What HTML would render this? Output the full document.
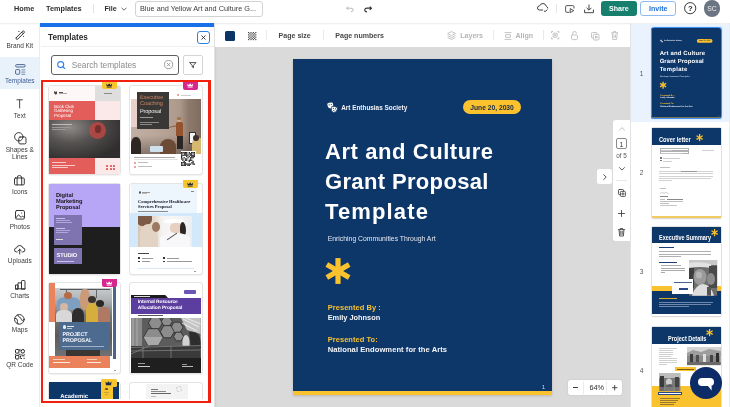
<!DOCTYPE html>
<html><head><meta charset="utf-8"><style>
html,body{margin:0;padding:0;}
body{width:730px;height:407px;overflow:hidden;position:relative;background:#fff;font-family:"Liberation Sans",sans-serif;}
.t{position:absolute;line-height:1;white-space:nowrap;}
.r{position:absolute;box-sizing:border-box;}
svg.r{overflow:visible;}
</style></head><body>
<div id="root" style="position:absolute;left:0;top:0;width:730px;height:407px;overflow:hidden;will-change:transform;"><div class="r" style="left:0.00px;top:22.50px;width:730.00px;height:2.50px;background:none;background:linear-gradient(180deg,#e9e9e9,#f4f4f4 45%,rgba(255,255,255,0));"></div><div class="t" style="left:14.00px;top:5.00px;font-size:7.3px;font-weight:700;color:#2e2e2e;letter-spacing:0px;">Home</div><div class="t" style="left:46.00px;top:5.00px;font-size:7.3px;font-weight:700;color:#2e2e2e;letter-spacing:0px;">Templates</div><div class="r" style="left:93.00px;top:3.70px;width:1.00px;height:9.00px;background:#e3e3e3;"></div><div class="t" style="left:104.50px;top:6.00px;font-size:7.1px;font-weight:700;color:#2e2e2e;letter-spacing:0px;">File</div><svg class="r" style="left:120.50px;top:6.50px;" width="6" height="4" viewBox="0 0 6 4"><path d="M0.6 0.8 L3 3.2 L5.4 0.8" fill="none" stroke="#555" stroke-width="0.9"/></svg><div class="r" style="left:135.00px;top:0.50px;width:128.00px;height:16.10px;background:#fff;border:1px solid #d2d2d2;border-radius:3px;"></div><div class="t" style="left:140.00px;top:5.00px;font-size:7.3px;font-weight:400;color:#3a3a3a;letter-spacing:0px;">Blue and Yellow Art and Culture G...</div><svg class="r" style="left:345.50px;top:5.50px;" width="8" height="6" viewBox="0 0 8 6"><path d="M2.2 0.6 L0.6 2.2 L2.2 3.8 M0.7 2.2 H5 Q7.3 2.2 7.3 4 Q7.3 5.6 5 5.6" fill="none" stroke="#b8b8b8" stroke-width="1"/></svg><svg class="r" style="left:363.50px;top:5.50px;" width="8" height="6.5" viewBox="0 0 8 6.5"><path d="M5.8 0.6 L7.4 2.2 L5.8 3.8 M7.3 2.2 H3 Q0.8 2.2 0.8 4 Q0.8 5.8 3 5.8" fill="none" stroke="#333" stroke-width="1.2"/></svg><svg class="r" style="left:537.00px;top:3.40px;" width="11.5" height="9.5" viewBox="0 0 11.5 9.5"><path d="M5.6 7 H2.5 Q0.5 7 0.5 5 Q0.5 3 2.5 2.9 Q3.5 0.5 6 0.5 Q8.5 0.5 9.2 3.1 Q10.7 3.6 10.7 5" fill="none" stroke="#3a3a3a" stroke-width="0.95" stroke-linecap="round"/><path d="M7.2 7.9 L8.1 8.7 L10.2 6.8" fill="none" stroke="#3a3a3a" stroke-width="0.95" stroke-linecap="round"/></svg><div class="r" style="left:556.00px;top:3.80px;width:1.00px;height:8.80px;background:#e6e6e6;"></div><svg class="r" style="left:565.00px;top:5.00px;" width="10" height="8" viewBox="0 0 10 8"><path d="M4.5 7.3 H1.8 Q0.6 7.3 0.6 6.1 V1.8 Q0.6 0.6 1.8 0.6 H7.8 Q9 0.6 9 1.8 V3.5" fill="none" stroke="#444" stroke-width="0.9"/><path d="M5.2 3.6 L8.8 5.6 L5.2 7.6 Z" fill="none" stroke="#444" stroke-width="0.9"/></svg><svg class="r" style="left:584.00px;top:3.80px;" width="10" height="9.3" viewBox="0 0 10 9.3"><path d="M5 0.5 V6 M2.6 3.8 L5 6.2 L7.4 3.8 M0.6 5.6 V8.7 H9.4 V5.6" fill="none" stroke="#444" stroke-width="1"/></svg><div class="r" style="left:601.00px;top:1.00px;width:35.60px;height:15.30px;background:#177f6e;border-radius:3px;"></div><div class="t" style="left:618.80px;transform:translateX(-50%);top:6.00px;font-size:7.1px;font-weight:700;color:#fff;letter-spacing:0px;">Share</div><div class="r" style="left:640.30px;top:0.60px;width:36.10px;height:15.70px;background:#fff;border:1px solid #8dbaf3;border-radius:3px;"></div><div class="t" style="left:658.30px;transform:translateX(-50%);top:6.00px;font-size:7.1px;font-weight:700;color:#1d6fd8;letter-spacing:0px;">Invite</div><svg class="r" style="left:684.00px;top:2.20px;" width="12.4" height="12.4" viewBox="0 0 12.4 12.4"><circle cx="6.2" cy="6.2" r="5.6" fill="none" stroke="#222" stroke-width="0.9"/><text x="6.2" y="8.7" font-size="7.6" font-weight="700" text-anchor="middle" fill="#222" font-family="Liberation Sans">?</text></svg><div class="r" style="left:703.60px;top:0.00px;width:16.60px;height:16.60px;background:#6b7482;border-radius:50%;"></div><div class="t" style="left:711.90px;transform:translateX(-50%);top:6.00px;font-size:6.8px;font-weight:400;color:#eef0f3;letter-spacing:0px;">SC</div><div class="r" style="left:39.30px;top:24.00px;width:0.80px;height:383.00px;background:#ececec;"></div><div class="r" style="left:0.00px;top:57.40px;width:39.30px;height:31.40px;background:#e9f1fb;"></div><div class="t" style="left:19.80px;transform:translateX(-50%);top:43.00px;font-size:6.5px;font-weight:400;color:#3a3a3a;letter-spacing:0px;">Brand Kit</div><div class="t" style="left:19.80px;transform:translateX(-50%);top:78.00px;font-size:6.5px;font-weight:400;color:#3d5e94;letter-spacing:0px;">Templates</div><div class="t" style="left:19.80px;transform:translateX(-50%);top:113.00px;font-size:6.5px;font-weight:400;color:#3a3a3a;letter-spacing:0px;">Text</div><div class="t" style="left:19.80px;transform:translateX(-50%);top:147.00px;font-size:6.5px;font-weight:400;color:#3a3a3a;letter-spacing:0px;">Shapes &amp;</div><div class="t" style="left:19.80px;transform:translateX(-50%);top:154.00px;font-size:6.5px;font-weight:400;color:#3a3a3a;letter-spacing:0px;">Lines</div><div class="t" style="left:19.80px;transform:translateX(-50%);top:189.00px;font-size:6.5px;font-weight:400;color:#3a3a3a;letter-spacing:0px;">Icons</div><div class="t" style="left:19.80px;transform:translateX(-50%);top:224.00px;font-size:6.5px;font-weight:400;color:#3a3a3a;letter-spacing:0px;">Photos</div><div class="t" style="left:19.80px;transform:translateX(-50%);top:258.00px;font-size:6.5px;font-weight:400;color:#3a3a3a;letter-spacing:0px;">Uploads</div><div class="t" style="left:19.80px;transform:translateX(-50%);top:293.00px;font-size:6.5px;font-weight:400;color:#3a3a3a;letter-spacing:0px;">Charts</div><div class="t" style="left:19.80px;transform:translateX(-50%);top:327.00px;font-size:6.5px;font-weight:400;color:#3a3a3a;letter-spacing:0px;">Maps</div><div class="t" style="left:19.80px;transform:translateX(-50%);top:362.00px;font-size:6.5px;font-weight:400;color:#3a3a3a;letter-spacing:0px;">QR Code</div><svg class="r" style="left:14.50px;top:29.50px;" width="11" height="10" viewBox="0 0 11 10"><path d="M1.3 7.6 L7.6 1.3 Q8.4 0.6 9.1 1.3 Q9.8 2.1 9.1 2.8 L2.8 9.1 Q2.1 9.8 1.3 9.1 Q0.6 8.4 1.3 7.6 Z M6.8 2.2 L8.2 3.6" fill="none" stroke="#2e2e2e" stroke-width="0.95" stroke-linecap="round" stroke-linejoin="round"/><circle cx="3.9" cy="1.4" r="0.55" fill="#2e2e2e"/><circle cx="8.5" cy="6.3" r="0.55" fill="#2e2e2e"/></svg><svg class="r" style="left:14.70px;top:64.00px;" width="10.8" height="10.8" viewBox="0 0 10.8 10.8"><rect x="0.6" y="0.6" width="9.6" height="2.4" rx="1.2" fill="none" stroke="#46618f" stroke-width="0.95" stroke-linejoin="round"/><rect x="0.6" y="5.6" width="4.1" height="4.6" rx="0.8" fill="none" stroke="#46618f" stroke-width="0.95" stroke-linejoin="round"/><path d="M6.4 5.9 H10.3 M6.4 8.1 H10.3 M6.4 10.3 H10.3" fill="none" stroke="#46618f" stroke-width="0.7"/></svg><svg class="r" style="left:16.30px;top:98.50px;" width="7.5" height="10" viewBox="0 0 7.5 10"><path d="M0.5 0.8 H6.8 M3.65 0.8 V9.3" fill="none" stroke="#333" stroke-width="0.9"/></svg><svg class="r" style="left:13.60px;top:132.30px;" width="12.6" height="12.4" viewBox="0 0 12.6 12.4"><circle cx="4.8" cy="4.8" r="4.2" fill="none" stroke="#2e2e2e" stroke-width="0.95" stroke-linecap="round" stroke-linejoin="round"/><rect x="4.8" y="5" width="7.2" height="6.9" rx="1.3" fill="none" stroke="#2e2e2e" stroke-width="0.95" stroke-linecap="round" stroke-linejoin="round"/></svg><svg class="r" style="left:14.30px;top:174.80px;" width="10.8" height="10.4" viewBox="0 0 10.8 10.4"><rect x="0.5" y="3" width="9.8" height="6.9" rx="1" fill="none" stroke="#2e2e2e" stroke-width="0.95" stroke-linecap="round" stroke-linejoin="round"/><path d="M3.1 9.9 V3 Q3.1 0.5 5.4 0.5 Q7.7 0.5 7.7 3 V9.9" fill="none" stroke="#2e2e2e" stroke-width="0.95" stroke-linecap="round" stroke-linejoin="round"/></svg><svg class="r" style="left:14.70px;top:210.40px;" width="10" height="9.6" viewBox="0 0 10 9.6"><rect x="0.5" y="0.5" width="9" height="8.6" rx="1.4" fill="none" stroke="#2e2e2e" stroke-width="0.95" stroke-linecap="round" stroke-linejoin="round"/><path d="M0.8 8 L3.4 4.8 L6.2 7.4 L7.6 6 L9.3 7.6" fill="none" stroke="#2e2e2e" stroke-width="0.95" stroke-linecap="round" stroke-linejoin="round"/><circle cx="6.6" cy="3" r="0.6" fill="#2e2e2e"/></svg><svg class="r" style="left:14.20px;top:245.40px;" width="11.5" height="9.5" viewBox="0 0 11.5 9.5"><path d="M3.2 7 H2.8 Q0.5 7 0.5 4.9 Q0.5 3 2.5 2.9 Q3.2 0.5 5.7 0.5 Q8.3 0.5 8.8 2.9 Q10.9 3 10.9 4.9 Q10.9 7 8.6 7 H8.2" fill="none" stroke="#2e2e2e" stroke-width="0.95" stroke-linecap="round" stroke-linejoin="round"/><path d="M5.7 9 V4.3 M4.2 5.8 L5.7 4.3 L7.2 5.8" fill="none" stroke="#2e2e2e" stroke-width="0.95" stroke-linecap="round" stroke-linejoin="round"/></svg><svg class="r" style="left:14.70px;top:279.70px;" width="10.5" height="9.3" viewBox="0 0 10.5 9.3"><path d="M0.5 8.8 V5 H3 V8.8 Z M3 8.8 V2.9 H6.5 V8.8 M6.5 8.8 V1.2 Q6.5 0.5 7.2 0.5 H9.3 Q10 0.5 10 1.2 V8.8 Z M0.5 8.8 H10" fill="none" stroke="#2e2e2e" stroke-width="0.95" stroke-linecap="round" stroke-linejoin="round"/></svg><svg class="r" style="left:14.40px;top:314.20px;" width="10.8" height="10.8" viewBox="0 0 10.8 10.8"><circle cx="5.4" cy="5.4" r="4.8" fill="none" stroke="#2e2e2e" stroke-width="0.95" stroke-linecap="round" stroke-linejoin="round"/><path d="M3.6 0.9 Q4.2 2.8 6.2 3.6 Q7.2 4 7.3 5.3 Q7.5 6.6 8.8 6.4 Q9.6 6.3 10 5.6 M0.8 4.4 Q2.2 4.2 3 5.2 Q3.6 6 3.4 7.4 Q3.3 8.8 4 9.9" fill="none" stroke="#2e2e2e" stroke-width="0.95" stroke-linecap="round" stroke-linejoin="round"/></svg><svg class="r" style="left:14.90px;top:348.80px;" width="10" height="10.4" viewBox="0 0 10 10.4"><rect x="0.5" y="0.5" width="3.4" height="3.6" rx="0.8" fill="none" stroke="#1e1e1e" stroke-width="1"/><rect x="6.1" y="0.5" width="3.4" height="3.6" rx="1.7" fill="none" stroke="#1e1e1e" stroke-width="1"/><rect x="0.5" y="6.4" width="3.4" height="3.6" rx="0.6" fill="none" stroke="#1e1e1e" stroke-width="1"/><rect x="4.5" y="0" width="0.9" height="2" fill="#1e1e1e"/><rect x="3.4" y="4.8" width="2.2" height="0.9" fill="#1e1e1e"/><rect x="0" y="4.9" width="0.9" height="0.9" fill="#1e1e1e"/><rect x="6.4" y="4.9" width="0.9" height="0.9" fill="#1e1e1e"/><rect x="8.8" y="4.9" width="0.9" height="0.9" fill="#1e1e1e"/><rect x="5" y="6.6" width="1" height="2" fill="#1e1e1e"/><rect x="6.5" y="6.3" width="3" height="1" fill="#1e1e1e"/><rect x="8.6" y="8.8" width="1" height="1.2" fill="#1e1e1e"/><rect x="5.5" y="9" width="1.5" height="1" fill="#1e1e1e"/></svg><div class="r" style="left:214.00px;top:23.00px;width:1.00px;height:384.00px;background:#e2e2e2;"></div><div class="r" style="left:39.80px;top:23.00px;width:174.70px;height:4.00px;background:#1672e6;"></div><div class="t" style="left:48.00px;top:34.00px;font-size:8.2px;font-weight:700;color:#2a2a2a;letter-spacing:0px;">Templates</div><div class="r" style="left:197.00px;top:30.50px;width:13.30px;height:13.20px;background:#fff;border:1px solid #2f7fe0;border-radius:3px;"></div><svg class="r" style="left:201.20px;top:34.60px;" width="5" height="5" viewBox="0 0 5 5"><path d="M0.5 0.5 L4.5 4.5 M4.5 0.5 L0.5 4.5" stroke="#2a2a2a" stroke-width="0.9"/></svg><div class="r" style="left:40.50px;top:46.00px;width:173.50px;height:1.00px;background:#efefef;"></div><div class="r" style="left:51.00px;top:54.70px;width:128.30px;height:20.80px;background:#fff;border:1px solid #5f5f5f;border-radius:3px;"></div><svg class="r" style="left:57.00px;top:61.20px;" width="9" height="8" viewBox="0 0 9 8"><circle cx="3.7" cy="3.6" r="3" fill="none" stroke="#2f80ed" stroke-width="1.1"/><path d="M5.9 5.8 L7.8 7.5" stroke="#2f80ed" stroke-width="1.1" stroke-linecap="round"/></svg><div class="t" style="left:71.70px;top:61.00px;font-size:8.3px;font-weight:400;color:#8a8a8a;letter-spacing:0px;">Search templates</div><svg class="r" style="left:164.30px;top:60.40px;" width="9.2" height="9.2" viewBox="0 0 9.2 9.2"><circle cx="4.6" cy="4.6" r="4.1" fill="none" stroke="#8a8a8a" stroke-width="0.8"/><path d="M3 3 L6.2 6.2 M6.2 3 L3 6.2" stroke="#8a8a8a" stroke-width="0.8"/></svg><div class="r" style="left:182.90px;top:55.20px;width:20.10px;height:19.60px;background:#fff;border:1px solid #d4d4d4;border-radius:2px;"></div><svg class="r" style="left:188.80px;top:61.80px;" width="7.6" height="6.4" viewBox="0 0 7.6 6.4"><path d="M0.6 0.6 H7 L4.4 3.4 V5.8 L3.2 5 V3.4 Z" fill="none" stroke="#333" stroke-width="0.85" stroke-linejoin="round"/></svg><div class="r" style="left:40.80px;top:79.90px;width:170.30px;height:323.00px;background:none;border:2.6px solid #f2210f;border-right-width:3.2px;"></div><div class="r" style="left:43px;top:82px;width:166px;height:316.5px;overflow:hidden;text-rendering:geometricPrecision;"><div class="r" style="left:5.00px;top:2.50px;width:73.00px;height:90.70px;background:#fff;border:1px solid #e4e4e4;border-radius:3px;box-shadow:0 0.5px 1px rgba(0,0,0,0.06);"></div><div class="r" style="left:52.00px;top:3.50px;width:25.00px;height:15.50px;background:#dedede;"></div><div class="r" style="left:6.00px;top:3.50px;width:46.00px;height:15.50px;background:#fdf8f7;"></div><div class="r" style="left:11.20px;top:8.70px;width:3.20px;height:4.10px;background:#444;clip-path:polygon(0 0,35% 25%,65% 25%,100% 0,100% 70%,50% 100%,0 70%);"></div><div class="r" style="left:16.00px;top:9.60px;width:3.50px;height:1.00px;background:#555;"></div><div class="r" style="left:16.00px;top:11.40px;width:7.50px;height:0.50px;background:#aaa;"></div><div class="r" style="left:60.50px;top:10.70px;width:8.00px;height:0.60px;background:#8a8a8a;"></div><div class="r" style="left:6.00px;top:19.00px;width:45.50px;height:19.00px;background:#e35d5a;"></div><div class="r" style="left:51.50px;top:19.00px;width:25.50px;height:19.00px;background:#fbe8e8;"></div><div class="t" style="left:11.00px;top:23.00px;font-size:4.5px;font-weight:400;color:#fff;letter-spacing:-0.1px;">Book Club</div><div class="t" style="left:11.00px;top:27.00px;font-size:4.5px;font-weight:400;color:#fff;letter-spacing:-0.1px;">Gathering</div><div class="t" style="left:11.00px;top:32.00px;font-size:4.5px;font-weight:400;color:#fff;letter-spacing:-0.1px;">Proposal</div><div class="r" style="left:6.00px;top:38.00px;width:71.00px;height:38.00px;background:#3a3838;background:radial-gradient(ellipse at 30% 20%,#8d8a88 0%,#565352 35%,#2f2d2d 80%);"></div><div class="r" style="left:46.20px;top:39.70px;width:17.20px;height:17.20px;background:rgba(200,70,65,0.75);border-radius:50%;"></div><div class="r" style="left:52.00px;top:43.00px;width:6.00px;height:8.00px;background:rgba(80,30,30,0.6);border-radius:45%;"></div><div class="r" style="left:9.00px;top:42.00px;width:20.00px;height:0.60px;background:#bbb;"></div><div class="r" style="left:9.00px;top:44.50px;width:18.00px;height:0.60px;background:#999;"></div><div class="r" style="left:9.00px;top:47.00px;width:14.00px;height:0.60px;background:#999;"></div><div class="r" style="left:6.00px;top:76.00px;width:45.50px;height:15.50px;background:#e35d5a;"></div><div class="r" style="left:51.50px;top:76.00px;width:25.50px;height:15.50px;background:#fbe8e8;"></div><div class="r" style="left:9.00px;top:80.00px;width:14.00px;height:0.60px;background:#f7c9c8;"></div><div class="r" style="left:9.00px;top:82.50px;width:23.00px;height:0.60px;background:#f7c9c8;"></div><div class="r" style="left:9.00px;top:85.00px;width:16.00px;height:0.60px;background:#f7c9c8;"></div><div class="r" style="left:63.30px;top:83.20px;width:2.00px;height:2.00px;background:#e35d5a;border-radius:0.5px;"></div><div class="r" style="left:63.30px;top:86.40px;width:2.00px;height:2.00px;background:#e35d5a;border-radius:0.5px;"></div><div class="r" style="left:66.70px;top:83.20px;width:2.00px;height:2.00px;background:#e35d5a;border-radius:0.5px;"></div><div class="r" style="left:66.70px;top:86.40px;width:2.00px;height:2.00px;background:#e35d5a;border-radius:0.5px;"></div><div class="r" style="left:70.10px;top:83.20px;width:2.00px;height:2.00px;background:#e35d5a;border-radius:0.5px;"></div><div class="r" style="left:70.10px;top:86.40px;width:2.00px;height:2.00px;background:#e35d5a;border-radius:0.5px;"></div><div class="r" style="left:59.00px;top:-0.80px;width:14.60px;height:8.00px;background:#f7c52e;border-radius:0 0 2px 2px;"></div><svg class="r" style="left:63.10px;top:0.80px" width="6.4" height="4.8" viewBox="0 0 6 4.5"><path d="M0.2 0.5 L1.7 2 L3 0.2 L4.3 2 L5.8 0.5 L5.3 3.3 H0.7 Z M0.7 3.7 H5.3 V4.3 H0.7 Z" fill="#1c2640"/></svg><div class="r" style="left:86.00px;top:2.50px;width:74.00px;height:90.70px;background:#fff;border:1px solid #e4e4e4;border-radius:3px;box-shadow:0 0.5px 1px rgba(0,0,0,0.06);"></div><div class="r" style="left:88.00px;top:16.70px;width:69.80px;height:55.30px;background:#b3a092;background:linear-gradient(90deg,#c2b0a5 0%,#b9a699 40%,#ad998b 70%,#8e7a6d 82%,#7f6c60 100%);"></div><div class="r" style="left:88.00px;top:16.70px;width:6.40px;height:28.30px;background:#e8d0cb;"></div><div class="r" style="left:88.00px;top:53.00px;width:69.80px;height:19.00px;background:rgba(70,55,45,0.3);background:linear-gradient(180deg,rgba(70,55,45,0) 0%,rgba(60,48,40,0.45) 100%);"></div><div class="r" style="left:134.00px;top:35.80px;width:4.00px;height:4.20px;background:#d9a98a;border-radius:50%;"></div><div class="r" style="left:133.60px;top:35.30px;width:4.80px;height:2.70px;background:#a0744f;border-radius:50% 50% 20% 20%;"></div><div class="r" style="left:133.00px;top:40.00px;width:7.00px;height:13.50px;background:#94522f;border-radius:2px 2px 0 0;"></div><div class="r" style="left:125.50px;top:43.60px;width:8.50px;height:1.20px;background:#94522f;transform:rotate(-12deg);"></div><div class="r" style="left:134.00px;top:53.50px;width:5.50px;height:13.00px;background:#2b2624;"></div><div class="r" style="left:145.50px;top:49.50px;width:7.50px;height:12.50px;background:#f4f4f6;border:0.6px solid #333;"></div><div class="r" style="left:88.00px;top:55.00px;width:10.00px;height:17.00px;background:#2e2622;border-radius:45% 45% 0 0;"></div><div class="r" style="left:117.00px;top:57.00px;width:16.00px;height:15.00px;background:#6b4a36;border-radius:50% 50% 0 0;"></div><div class="r" style="left:149.00px;top:55.50px;width:8.80px;height:16.50px;background:#d6b870;border-radius:40% 0 0 0;"></div><div class="r" style="left:150.00px;top:52.50px;width:6.00px;height:6.50px;background:#3a2e28;border-radius:50%;"></div><div class="r" style="left:107.00px;top:63.50px;width:13.00px;height:6.00px;background:#cfe0ef;border-radius:1px;"></div><div class="r" style="left:94.40px;top:9.90px;width:31.60px;height:36.70px;background:#393837;"></div><div class="t" style="left:97.00px;top:14.00px;font-size:5.6px;font-weight:400;color:#c98560;letter-spacing:-0.12px;">Executive</div><div class="t" style="left:97.00px;top:20.00px;font-size:5.6px;font-weight:400;color:#c98560;letter-spacing:-0.12px;">Coaching</div><div class="t" style="left:97.00px;top:28.00px;font-size:5.6px;font-weight:400;color:#f0f0f0;letter-spacing:-0.12px;">Proposal</div><div class="r" style="left:97.40px;top:35.40px;width:12.80px;height:0.40px;background:#9a9a9a;"></div><div class="r" style="left:97.40px;top:39.60px;width:18.40px;height:0.50px;background:#8a8a8a;"></div><div class="r" style="left:97.40px;top:41.60px;width:11.60px;height:0.50px;background:#8a8a8a;"></div><div class="r" style="left:134.00px;top:12.20px;width:2.20px;height:2.20px;background:#e58a78;border-radius:50%;"></div><div class="r" style="left:138.00px;top:13.10px;width:10.00px;height:0.40px;background:#cfcfcf;"></div><div class="r" style="left:91.00px;top:74.60px;width:41.00px;height:0.40px;background:#a8a8a8;"></div><div class="r" style="left:91.00px;top:77.00px;width:44.00px;height:0.30px;background:#e2e2e2;"></div><div class="r" style="left:91.20px;top:79.50px;width:2.00px;height:2.00px;background:#e58a78;border-radius:50%;"></div><div class="r" style="left:95.00px;top:80.20px;width:10.00px;height:0.40px;background:#bdbdbd;"></div><div class="r" style="left:91.20px;top:83.50px;width:2.00px;height:2.00px;background:#e58a78;border-radius:50%;"></div><div class="r" style="left:95.00px;top:84.20px;width:14.00px;height:0.40px;background:#bdbdbd;"></div><div class="r" style="left:137.50px;top:68.80px;width:15.50px;height:16.20px;background:#fff;"></div><svg class="r" style="left:138.30px;top:69.60px" width="14" height="14" viewBox="0 0 11 11"><g fill="#1a1a1a"><rect x="3" y="0" width="1" height="1"/><rect x="4" y="0" width="1" height="1"/><rect x="6" y="0" width="1" height="1"/><rect x="3" y="1" width="1" height="1"/><rect x="4" y="1" width="1" height="1"/><rect x="6" y="1" width="1" height="1"/><rect x="7" y="1" width="1" height="1"/><rect x="3" y="2" width="1" height="1"/><rect x="4" y="2" width="1" height="1"/><rect x="5" y="2" width="1" height="1"/><rect x="7" y="2" width="1" height="1"/><rect x="0" y="3" width="1" height="1"/><rect x="4" y="3" width="1" height="1"/><rect x="6" y="3" width="1" height="1"/><rect x="8" y="3" width="1" height="1"/><rect x="9" y="3" width="1" height="1"/><rect x="10" y="3" width="1" height="1"/><rect x="0" y="4" width="1" height="1"/><rect x="2" y="4" width="1" height="1"/><rect x="5" y="4" width="1" height="1"/><rect x="7" y="4" width="1" height="1"/><rect x="8" y="4" width="1" height="1"/><rect x="9" y="4" width="1" height="1"/><rect x="0" y="5" width="1" height="1"/><rect x="1" y="5" width="1" height="1"/><rect x="3" y="5" width="1" height="1"/><rect x="4" y="5" width="1" height="1"/><rect x="7" y="5" width="1" height="1"/><rect x="1" y="6" width="1" height="1"/><rect x="3" y="6" width="1" height="1"/><rect x="4" y="6" width="1" height="1"/><rect x="6" y="6" width="1" height="1"/><rect x="7" y="6" width="1" height="1"/><rect x="8" y="6" width="1" height="1"/><rect x="2" y="7" width="1" height="1"/><rect x="6" y="7" width="1" height="1"/><rect x="9" y="7" width="1" height="1"/><rect x="3" y="8" width="1" height="1"/><rect x="8" y="8" width="1" height="1"/><rect x="9" y="8" width="1" height="1"/><rect x="3" y="9" width="1" height="1"/><rect x="4" y="9" width="1" height="1"/><rect x="5" y="9" width="1" height="1"/><rect x="6" y="9" width="1" height="1"/><rect x="7" y="9" width="1" height="1"/><rect x="9" y="9" width="1" height="1"/><rect x="10" y="9" width="1" height="1"/><rect x="3" y="10" width="1" height="1"/><rect x="5" y="10" width="1" height="1"/><rect x="6" y="10" width="1" height="1"/><rect x="0.3" y="0.3" width="2.4" height="2.4" fill="none" stroke="#1a1a1a" stroke-width="0.6"/><rect x="1" y="1" width="1" height="1"/><rect x="8.3" y="0.3" width="2.4" height="2.4" fill="none" stroke="#1a1a1a" stroke-width="0.6"/><rect x="9" y="1" width="1" height="1"/><rect x="0.3" y="8.3" width="2.4" height="2.4" fill="none" stroke="#1a1a1a" stroke-width="0.6"/><rect x="1" y="9" width="1" height="1"/></g></svg><div class="r" style="left:140.00px;top:-0.40px;width:14.60px;height:8.00px;background:#d6278f;border-radius:0 0 2px 2px;"></div><svg class="r" style="left:144.10px;top:1.20px" width="6.4" height="4.8" viewBox="0 0 6 4.5"><path d="M0.2 0.5 L1.7 2 L3 0.2 L4.3 2 L5.8 0.5 L5.3 3.3 H0.7 Z M0.7 3.7 H5.3 V4.3 H0.7 Z" fill="#fff"/></svg><div class="r" style="left:5.00px;top:101.00px;width:73.00px;height:91.50px;background:#fff;border:1px solid #e4e4e4;border-radius:3px;box-shadow:0 0.5px 1px rgba(0,0,0,0.06);"></div><div class="r" style="left:6.00px;top:102.00px;width:71.00px;height:43.00px;background:#b7a6f5;"></div><div class="r" style="left:6.00px;top:145.00px;width:71.00px;height:46.50px;background:#1f1e1f;"></div><div class="t" style="left:13.00px;top:112.00px;font-size:5.7px;font-weight:700;color:#171717;letter-spacing:-0.05px;">Digital</div><div class="t" style="left:13.00px;top:118.00px;font-size:5.7px;font-weight:700;color:#171717;letter-spacing:-0.05px;">Marketing</div><div class="t" style="left:13.00px;top:124.00px;font-size:5.7px;font-weight:700;color:#171717;letter-spacing:-0.05px;">Proposal</div><div class="r" style="left:10.60px;top:132.80px;width:28.20px;height:30.20px;background:#7f74b0;"></div><div class="r" style="left:12.50px;top:136.00px;width:9.50px;height:0.80px;background:#c9c0ee;"></div><div class="r" style="left:12.50px;top:138.00px;width:14.50px;height:0.60px;background:#b0a6dc;"></div><div class="r" style="left:12.50px;top:140.00px;width:16.50px;height:0.60px;background:#b0a6dc;"></div><div class="r" style="left:12.50px;top:146.00px;width:9.50px;height:0.80px;background:#c9c0ee;"></div><div class="r" style="left:12.50px;top:148.00px;width:14.50px;height:0.60px;background:#b0a6dc;"></div><div class="r" style="left:12.50px;top:150.00px;width:12.50px;height:0.60px;background:#b0a6dc;"></div><div class="r" style="left:12.50px;top:157.00px;width:7.50px;height:0.80px;background:#ddd;"></div><div class="r" style="left:10.60px;top:166.00px;width:28.20px;height:16.00px;background:#7f74b0;"></div><div class="t" style="left:13.50px;top:172.00px;font-size:5.6px;font-weight:700;color:#fff;letter-spacing:-0.1px;">STUDIO</div><div class="r" style="left:14.00px;top:178.50px;width:17.00px;height:0.50px;background:#c9c2ea;"></div><div class="r" style="left:86.00px;top:101.00px;width:74.00px;height:91.50px;background:#fff;border:1px solid #e4e4e4;border-radius:3px;box-shadow:0 0.5px 1px rgba(0,0,0,0.06);"></div><div class="r" style="left:88.00px;top:102.00px;width:65.80px;height:28.60px;background:#edf5fd;"></div><div class="r" style="left:87.00px;top:130.60px;width:72.00px;height:34.70px;background:#d3e8fa;"></div><div class="r" style="left:95.60px;top:109.40px;width:2.40px;height:2.40px;background:none;border:0.5px solid #555;border-radius:50%;"></div><div class="r" style="left:99.00px;top:109.90px;width:7.50px;height:0.40px;background:#999;"></div><div class="r" style="left:99.00px;top:111.00px;width:5.00px;height:0.30px;background:#bbb;"></div><div class="r" style="left:147.80px;top:109.30px;width:3.00px;height:0.50px;background:#888;"></div><div class="t" style="left:95.00px;top:118.00px;font-size:4.5px;font-weight:700;color:#1c1c2c;letter-spacing:0px;font-family:'Liberation Serif';">Comprehensive Healthcare</div><div class="t" style="left:95.00px;top:123.00px;font-size:4.5px;font-weight:700;color:#1c1c2c;letter-spacing:0px;font-family:'Liberation Serif';">Services Proposal</div><div class="r" style="left:95.00px;top:128.90px;width:30.00px;height:0.50px;background:#8a8a8a;"></div><div class="r" style="left:95.00px;top:133.50px;width:53.60px;height:31.50px;background:#f0efee;background:linear-gradient(90deg,#d9c7b6 0%,#e6dacf 30%,#f4f3f2 45%,#f6f6f6 65%,#eceef0 100%);"></div><div class="r" style="left:95.00px;top:133.50px;width:14.00px;height:10.50px;background:#7c5a45;border-radius:0 0 60% 30%;"></div><div class="r" style="left:97.00px;top:142.00px;width:18.00px;height:23.00px;background:#e2d3c4;border-radius:50% 60% 0 0;"></div><div class="r" style="left:109.00px;top:140.00px;width:8.00px;height:10.00px;background:#9a7a62;border-radius:50%;"></div><div class="r" style="left:121.00px;top:137.00px;width:20.00px;height:4.00px;background:#ffffff;border-radius:50% 50% 20% 20%;"></div><div class="r" style="left:127.00px;top:141.00px;width:12.00px;height:10.00px;background:#e8cfc0;border-radius:40%;"></div><div class="r" style="left:137.00px;top:140.00px;width:6.00px;height:14.00px;background:#2b2523;border-radius:40% 60% 40% 40%;"></div><div class="r" style="left:117.00px;top:151.00px;width:30.00px;height:14.00px;background:#f8f8fa;border-radius:45% 45% 0 0;"></div><div class="r" style="left:123.00px;top:154.00px;width:12.00px;height:1.00px;background:#555;transform:rotate(-35deg);"></div><div class="r" style="left:95.00px;top:171.00px;width:11.00px;height:0.60px;background:#444;"></div><div class="r" style="left:95.00px;top:175.30px;width:2.00px;height:1.70px;background:#333;"></div><div class="r" style="left:98.50px;top:175.80px;width:11.50px;height:0.40px;background:#999;"></div><div class="r" style="left:120.00px;top:175.30px;width:2.00px;height:1.70px;background:#333;"></div><div class="r" style="left:123.50px;top:175.80px;width:12.50px;height:0.40px;background:#999;"></div><div class="r" style="left:95.00px;top:178.80px;width:2.00px;height:1.70px;background:#333;"></div><div class="r" style="left:98.50px;top:179.30px;width:8.50px;height:0.40px;background:#999;"></div><div class="r" style="left:120.00px;top:178.80px;width:2.00px;height:1.70px;background:#333;"></div><div class="r" style="left:123.50px;top:179.30px;width:25.50px;height:0.40px;background:#999;"></div><div class="r" style="left:95.00px;top:185.50px;width:56.00px;height:0.70px;background:#d7e8f8;"></div><div class="r" style="left:151.00px;top:189.00px;width:1.50px;height:0.50px;background:#999;"></div><div class="r" style="left:140.00px;top:98.30px;width:14.60px;height:8.00px;background:#f7c52e;border-radius:0 0 2px 2px;"></div><svg class="r" style="left:144.10px;top:99.90px" width="6.4" height="4.8" viewBox="0 0 6 4.5"><path d="M0.2 0.5 L1.7 2 L3 0.2 L4.3 2 L5.8 0.5 L5.3 3.3 H0.7 Z M0.7 3.7 H5.3 V4.3 H0.7 Z" fill="#1c2640"/></svg><div class="r" style="left:5.00px;top:200.00px;width:73.00px;height:92.00px;background:#fff;border:1px solid #e4e4e4;border-radius:3px;box-shadow:0 0.5px 1px rgba(0,0,0,0.06);"></div><div class="r" style="left:6.30px;top:201.40px;width:5.60px;height:38.40px;background:#ea835c;"></div><div class="r" style="left:11.90px;top:205.90px;width:57.60px;height:67.80px;background:#8d8f90;background:linear-gradient(180deg,#c9ccce 0%,#aeb2b5 18%,#777 40%,#5e5a58 70%,#707274 100%);"></div><div class="r" style="left:17.00px;top:207.00px;width:50.00px;height:1.00px;background:#555;"></div><div class="r" style="left:23.00px;top:207.00px;width:1.00px;height:11.00px;background:#666;"></div><div class="r" style="left:53.00px;top:207.00px;width:1.00px;height:9.00px;background:#666;"></div><div class="r" style="left:14.00px;top:215.00px;width:23.00px;height:13.00px;background:#7f9fc0;border-radius:40% 40% 0 0;"></div><div class="r" style="left:21.00px;top:210.00px;width:8.00px;height:7.00px;background:#b86a45;border-radius:50%;"></div><div class="r" style="left:17.00px;top:221.00px;width:8.00px;height:8.00px;background:#d4b8a4;border-radius:50%;"></div><div class="r" style="left:13.00px;top:228.00px;width:16.00px;height:12.00px;background:#d8d8d8;border-radius:40% 40% 0 0;"></div><div class="r" style="left:29.00px;top:226.00px;width:12.00px;height:14.00px;background:#2f2d2d;border-radius:50% 50% 0 0;"></div><div class="r" style="left:37.00px;top:207.00px;width:10.00px;height:21.00px;background:#c99b7a;border-radius:40%;"></div><div class="r" style="left:45.00px;top:214.00px;width:8.00px;height:7.00px;background:#3b3330;border-radius:50%;"></div><div class="r" style="left:43.00px;top:221.00px;width:12.00px;height:19.00px;background:#d6ae3e;border-radius:40% 40% 0 0;"></div><div class="r" style="left:53.00px;top:218.00px;width:8.00px;height:7.00px;background:#2c2624;border-radius:50%;"></div><div class="r" style="left:55.00px;top:225.00px;width:12.00px;height:15.00px;background:#b07a62;border-radius:40% 40% 0 0;"></div><div class="r" style="left:23.00px;top:268.00px;width:34.00px;height:5.70px;background:#3a3634;"></div><div class="r" style="left:69.50px;top:201.40px;width:3.50px;height:75.60px;background:#4c6587;"></div><div class="r" style="left:16.40px;top:239.80px;width:50.80px;height:28.20px;background:#4d6a8f;"></div><div class="r" style="left:20.00px;top:243.40px;width:3.20px;height:3.20px;background:#e8edf4;border-radius:50%;"></div><div class="r" style="left:24.30px;top:244.00px;width:6.70px;height:0.50px;background:#dfe6ef;"></div><div class="r" style="left:24.30px;top:245.60px;width:4.70px;height:0.40px;background:#b8c6d8;"></div><div class="t" style="left:19.40px;top:251.00px;font-size:5.4px;font-weight:700;color:#f4f6fa;letter-spacing:-0.05px;">PROJECT</div><div class="t" style="left:19.40px;top:257.00px;font-size:5.4px;font-weight:700;color:#f4f6fa;letter-spacing:-0.05px;">PROPOSAL</div><div class="r" style="left:19.40px;top:263.50px;width:41.60px;height:0.50px;background:#9fb0c8;"></div><div class="r" style="left:6.30px;top:273.70px;width:60.90px;height:12.80px;background:#ea835c;"></div><div class="r" style="left:10.00px;top:277.30px;width:12.00px;height:0.40px;background:#f8cdb9;"></div><div class="r" style="left:10.00px;top:279.60px;width:17.00px;height:0.70px;background:#fde9de;"></div><div class="r" style="left:44.00px;top:277.30px;width:10.00px;height:0.40px;background:#f8cdb9;"></div><div class="r" style="left:44.00px;top:279.60px;width:14.00px;height:0.70px;background:#fde9de;"></div><div class="r" style="left:71.00px;top:287.50px;width:1.50px;height:0.50px;background:#999;"></div><div class="r" style="left:59.00px;top:197.40px;width:14.60px;height:8.00px;background:#d6278f;border-radius:0 0 2px 2px;"></div><svg class="r" style="left:63.10px;top:199.00px" width="6.4" height="4.8" viewBox="0 0 6 4.5"><path d="M0.2 0.5 L1.7 2 L3 0.2 L4.3 2 L5.8 0.5 L5.3 3.3 H0.7 Z M0.7 3.7 H5.3 V4.3 H0.7 Z" fill="#fff"/></svg><div class="r" style="left:86.00px;top:200.00px;width:74.00px;height:92.00px;background:#fff;border:1px solid #e4e4e4;border-radius:3px;box-shadow:0 0.5px 1px rgba(0,0,0,0.06);"></div><div class="r" style="left:141.00px;top:207.50px;width:12.00px;height:4.00px;background:#6b56b7;border-radius:1px;"></div><div class="r" style="left:88.00px;top:212.70px;width:37.00px;height:3.30px;background:#1c1c1c;clip-path:polygon(0 0,92% 0,100% 100%,0 100%);"></div><div class="r" style="left:91.00px;top:214.00px;width:16.00px;height:0.60px;background:#ddd;"></div><div class="r" style="left:88.00px;top:216.00px;width:69.70px;height:15.60px;background:#5b3ea0;"></div><div class="t" style="left:94.80px;top:219.00px;font-size:4.9px;font-weight:700;color:#fff;letter-spacing:-0.08px;">Internal Resource</div><div class="t" style="left:94.80px;top:225.00px;font-size:4.9px;font-weight:700;color:#fff;letter-spacing:-0.08px;">Allocation Proposal</div><div class="r" style="left:95.20px;top:233.30px;width:25.20px;height:0.60px;background:#555;"></div><svg class="r" style="left:88px;top:236px;overflow:hidden" width="69.7" height="40.7" viewBox="0 0 69.7 40.7"><rect width="69.7" height="40.7" fill="#5c5c5c"/><path d="M50 0 H69.7 V16 L56 12 Z" fill="#c4c4c4"/><path d="M52 1 L68 9 M55 0 L69.7 6 M51 5 L66 13" stroke="#f0f0f0" stroke-width="0.9"/><rect x="0" y="0" width="11" height="28" fill="#8a8a8a"/><path d="M2 0 V28 M6 0 V28" stroke="#b5b5b5" stroke-width="0.8"/><path d="M58 14 Q69.7 12 69.7 26 V30 L60 30 Z" fill="#2e2e2e"/><polygon points="31.40,5.00 27.90,11.06 20.90,11.06 17.40,5.00 20.90,-1.06 27.90,-1.06" fill="#8c8c8c" stroke="#2a2a2a" stroke-width="0.8"/><polygon points="41.30,3.40 38.55,8.16 33.05,8.16 30.30,3.40 33.05,-1.36 38.55,-1.36" fill="#8c8c8c" stroke="#2a2a2a" stroke-width="0.8"/><polygon points="52.00,9.40 49.00,14.60 43.00,14.60 40.00,9.40 43.00,4.20 49.00,4.20" fill="#8c8c8c" stroke="#2a2a2a" stroke-width="0.8"/><polygon points="52.60,18.50 50.10,22.83 45.10,22.83 42.60,18.50 45.10,14.17 50.10,14.17" fill="#8c8c8c" stroke="#2a2a2a" stroke-width="0.8"/><polygon points="43.30,13.70 39.80,19.76 32.80,19.76 29.30,13.70 32.80,7.64 39.80,7.64" fill="#8c8c8c" stroke="#2a2a2a" stroke-width="0.8"/><polygon points="31.90,19.10 27.05,27.50 17.35,27.50 12.50,19.10 17.35,10.70 27.05,10.70" fill="#8c8c8c" stroke="#2a2a2a" stroke-width="0.8"/><polygon points="31.90,19.10 27.05,27.50 17.35,27.50 12.50,19.10 17.35,10.70 27.05,10.70" fill="#a9a9a9" clip-path="inset(50% 0 0 0)" stroke="none"/><ellipse cx="55" cy="25" rx="3.6" ry="8" fill="#d2d2d2"/><rect x="0" y="28" width="69.7" height="12.7" fill="#3a3a3a"/><path d="M0 29.5 L69.7 27.5 M0 33 L69.7 32 M12 28 V40.7 M40 28 V40.7 M0 36 L20 27" stroke="#8a8a8a" stroke-width="0.7"/></svg><div class="r" style="left:88.00px;top:276.40px;width:69.70px;height:14.80px;background:#1f1f1f;"></div><div class="r" style="left:95.00px;top:281.00px;width:7.00px;height:0.50px;background:#999;"></div><div class="r" style="left:95.00px;top:283.80px;width:12.00px;height:0.70px;background:#ccc;"></div><div class="r" style="left:138.50px;top:281.50px;width:5.50px;height:0.50px;background:#999;"></div><div class="r" style="left:138.50px;top:283.80px;width:11.00px;height:0.70px;background:#bbb;"></div><div class="r" style="left:5.00px;top:299.50px;width:73.00px;height:38.50px;background:#fff;border:1px solid #e4e4e4;border-radius:3px;box-shadow:0 0.5px 1px rgba(0,0,0,0.06);"></div><div class="r" style="left:6.40px;top:300.40px;width:70.10px;height:37.60px;background:#0d3669;"></div><div class="t" style="left:17.30px;top:313.00px;font-size:5.9px;font-weight:700;color:#fff;letter-spacing:0px;">Academic</div><div class="r" style="left:57.90px;top:298.00px;width:12.60px;height:40.00px;background:#f7c52e;border-radius:1.5px;"></div><div class="r" style="left:57.90px;top:296.80px;width:15.90px;height:8.50px;background:#f7c52e;border-radius:1.5px;"></div><svg class="r" style="left:62.20px;top:298.60px" width="7" height="4.6" viewBox="0 0 6 4"><path d="M0.3 0.4 L1.8 1.8 L3 0.2 L4.2 1.8 L5.7 0.4 L5.2 3.6 H0.8 Z" fill="#1d2a4a"/></svg><div class="r" style="left:62.20px;top:305.80px;width:2.40px;height:2.40px;background:#6d5a2a;border-radius:0.4px;"></div><div class="r" style="left:61.20px;top:310.00px;width:4.40px;height:0.50px;background:#c9a23a;"></div><div class="r" style="left:61.60px;top:311.50px;width:3.60px;height:0.50px;background:#c9a23a;"></div><div class="r" style="left:86.00px;top:300.00px;width:74.00px;height:38.00px;background:#fff;border:1px solid #e4e4e4;border-radius:3px;box-shadow:0 0.5px 1px rgba(0,0,0,0.06);"></div><div class="r" style="left:103.00px;top:302.00px;width:42.00px;height:36.00px;background:#f3f3f3;"></div><div class="r" style="left:108.00px;top:306.60px;width:7.00px;height:0.40px;background:#777;"></div><div class="r" style="left:108.00px;top:308.80px;width:15.00px;height:0.40px;background:#888;"></div><div class="r" style="left:108.00px;top:310.80px;width:20.00px;height:0.60px;background:#666;"></div><div class="r" style="left:108.00px;top:314.00px;width:5.00px;height:0.40px;background:#bbb;"></div><div class="r" style="left:133.00px;top:304.00px;width:6.00px;height:6.00px;background:none;border:0.4px dashed #ccc;border-radius:50%;"></div></div><div class="r" style="left:215.00px;top:46.50px;width:415.50px;height:360.50px;background:#dadada;"></div><div class="r" style="left:215.00px;top:46.00px;width:2.00px;height:361.00px;background:none;background:linear-gradient(90deg,rgba(0,0,0,0.06),rgba(0,0,0,0));"></div><div class="r" style="left:225.40px;top:30.90px;width:9.90px;height:9.90px;background:#0c3466;border-radius:1.5px;"></div><svg class="r" style="left:248.00px;top:31.80px;" width="8.4" height="8.2" viewBox="0 0 8.4 8.2"><g fill="#4a4a4a" transform="scale(1.2,1.17)"><rect x="0" y="0" width="1" height="1"/><rect x="2" y="0" width="1" height="1"/><rect x="4" y="0" width="1" height="1"/><rect x="6" y="0" width="1" height="1"/><rect x="1" y="1" width="1" height="1"/><rect x="3" y="1" width="1" height="1"/><rect x="5" y="1" width="1" height="1"/><rect x="0" y="2" width="1" height="1"/><rect x="2" y="2" width="1" height="1"/><rect x="4" y="2" width="1" height="1"/><rect x="6" y="2" width="1" height="1"/><rect x="1" y="3" width="1" height="1"/><rect x="3" y="3" width="1" height="1"/><rect x="5" y="3" width="1" height="1"/><rect x="0" y="4" width="1" height="1"/><rect x="2" y="4" width="1" height="1"/><rect x="4" y="4" width="1" height="1"/><rect x="6" y="4" width="1" height="1"/><rect x="1" y="5" width="1" height="1"/><rect x="3" y="5" width="1" height="1"/><rect x="5" y="5" width="1" height="1"/><rect x="0" y="6" width="1" height="1"/><rect x="2" y="6" width="1" height="1"/><rect x="4" y="6" width="1" height="1"/><rect x="6" y="6" width="1" height="1"/></g></svg><div class="r" style="left:266.00px;top:30.00px;width:1.00px;height:10.20px;background:#e9e9e9;"></div><div class="t" style="left:278.60px;top:32.00px;font-size:7.05px;font-weight:700;color:#474747;letter-spacing:0px;">Page size</div><div class="r" style="left:323.20px;top:30.00px;width:1.00px;height:10.20px;background:#e9e9e9;"></div><div class="t" style="left:335.30px;top:32.00px;font-size:7.05px;font-weight:700;color:#474747;letter-spacing:0px;">Page numbers</div><svg class="r" style="left:447.00px;top:31.00px;" width="9" height="9" viewBox="0 0 9 9"><path d="M4.5 0.6 L8.4 2.6 L4.5 4.6 L0.6 2.6 Z M0.6 4.6 L4.5 6.6 L8.4 4.6 M0.6 6.5 L4.5 8.5 L8.4 6.5" fill="none" stroke="#b9b9b9" stroke-width="0.85" stroke-linejoin="round"/></svg><div class="t" style="left:460.30px;top:32.00px;font-size:7.05px;font-weight:700;color:#b5b5b5;letter-spacing:0px;">Layers</div><div class="r" style="left:493.00px;top:30.00px;width:1.00px;height:10.20px;background:#e9e9e9;"></div><svg class="r" style="left:503.50px;top:31.50px;" width="8" height="8" viewBox="0 0 8 8"><path d="M0.5 0.6 H7.5 M0.5 7.4 H7.5" fill="none" stroke="#b9b9b9" stroke-width="0.85" stroke-linejoin="round"/><rect x="1.6" y="2.6" width="4.8" height="2.8" rx="0.4" fill="none" stroke="#b9b9b9" stroke-width="0.85" stroke-linejoin="round"/></svg><div class="t" style="left:515.50px;top:32.00px;font-size:7.05px;font-weight:700;color:#b5b5b5;letter-spacing:0px;">Align</div><div class="r" style="left:543.00px;top:30.00px;width:1.00px;height:10.20px;background:#e9e9e9;"></div><svg class="r" style="left:551.20px;top:31.30px;" width="8.4" height="8.4" viewBox="0 0 8.4 8.4"><path d="M0.5 2 V0.5 H2 M6.4 0.5 H7.9 V2 M7.9 6.4 V7.9 H6.4 M2 7.9 H0.5 V6.4" fill="none" stroke="#b9b9b9" stroke-width="0.85" stroke-linejoin="round"/><rect x="2.2" y="2.2" width="4" height="4" rx="0.3" fill="none" stroke="#b9b9b9" stroke-width="0.85" stroke-linejoin="round"/><circle cx="4.2" cy="4.2" r="0.8" fill="none" stroke="#b9b9b9" stroke-width="0.85" stroke-linejoin="round"/></svg><svg class="r" style="left:571.30px;top:31.20px;" width="7" height="9" viewBox="0 0 7 9"><path d="M1.6 4 V2.4 Q1.6 0.5 3.5 0.5 Q5.4 0.5 5.4 2.4 V2.8" fill="none" stroke="#b9b9b9" stroke-width="0.85" stroke-linejoin="round"/><rect x="0.5" y="4" width="6" height="4.6" rx="1" fill="none" stroke="#b9b9b9" stroke-width="0.85" stroke-linejoin="round"/></svg><svg class="r" style="left:590.80px;top:31.50px;" width="8.5" height="8.5" viewBox="0 0 8.5 8.5"><rect x="0.5" y="0.5" width="5.5" height="5.5" rx="1" fill="none" stroke="#b9b9b9" stroke-width="0.85" stroke-linejoin="round"/><rect x="2.3" y="2.3" width="5.7" height="5.7" rx="1" fill="#fff" stroke="#b9b9b9" stroke-width="0.85"/><path d="M4.5 3.9 L6.6 5.15 L4.5 6.4 Z" fill="none" stroke="#b9b9b9" stroke-width="0.85" stroke-linejoin="round"/></svg><svg class="r" style="left:611.00px;top:31.20px;" width="7.4" height="9" viewBox="0 0 7.4 9"><path d="M0.4 1.8 H7 M2.5 1.8 V0.6 H4.9 V1.8 M1.2 1.8 L1.7 8.4 H5.7 L6.2 1.8 M3 3.6 V6.8 M4.4 3.6 V6.8" fill="none" stroke="#b9b9b9" stroke-width="0.85" stroke-linejoin="round"/></svg><div class="r" style="left:293px;top:58.7px;width:259.3px;height:336px;box-shadow:0 0.5px 2.5px rgba(0,0,0,0.16);overflow:hidden;"><div class="r" style="left:0;top:0;width:259.5px;height:336px;background:#0d3669;overflow:hidden;"><svg class="r" style="left:33.80px;top:43.10px" width="11" height="11" viewBox="0 0 11 11"><g transform="rotate(-12 3.4 3.4)"><path d="M0.6 1.2 Q3.4 0.1 6.2 1.2 L6.2 3.4 Q6.2 6.2 3.4 6.4 Q0.6 6.2 0.6 3.4 Z" fill="#fff"/><circle cx="2.3" cy="2.7" r="0.6" fill="#0d3669"/><circle cx="4.5" cy="2.7" r="0.6" fill="#0d3669"/></g><g transform="rotate(14 7.2 7.4)"><path d="M4.2 5.0 Q7.2 3.8 10.1 5.0 L10.1 7.3 Q10.1 10.3 7.15 10.5 Q4.2 10.3 4.2 7.3 Z" fill="#fff" stroke="#0d3669" stroke-width="0.7"/><circle cx="6.1" cy="6.6" r="0.6" fill="#0d3669"/><circle cx="8.3" cy="6.6" r="0.6" fill="#0d3669"/><path d="M6.3 8.9 Q7.2 8.0 8.1 8.9" stroke="#0d3669" stroke-width="0.6" fill="none"/></g></svg><div class="t" style="left:48.20px;top:46.30px;font-size:6.4px;font-weight:700;color:#f2f4f8;letter-spacing:0px;">Art Enthusias Society</div><div class="r" style="left:170.00px;top:41.30px;width:57.50px;height:14.00px;background:#fbc22e;border-radius:7px;"></div><div class="t" style="left:177.30px;top:46.30px;font-size:6.7px;font-weight:700;color:#14284a;letter-spacing:0px;">June 20, 2030</div><div class="t" style="left:32.00px;top:82.30px;font-size:22px;font-weight:700;color:#fff;letter-spacing:0.57px;">Art and Culture</div><div class="t" style="left:32.00px;top:112.30px;font-size:22px;font-weight:700;color:#fff;letter-spacing:0.35px;">Grant Proposal</div><div class="t" style="left:32.00px;top:142.30px;font-size:22px;font-weight:700;color:#fff;letter-spacing:1.14px;">Template</div><div class="t" style="left:34.70px;top:177.30px;font-size:6.85px;font-weight:400;color:#e4e8f0;letter-spacing:0px;">Enriching Communities Through Art</div><svg class="r" style="left:31.60px;top:199.10px" width="26" height="26" viewBox="-13 -13 26 26"><g fill="#f9c22e"><rect x="-2.6" y="-12.9" width="5.2" height="25.8"/><rect x="-2.6" y="-12.9" width="5.2" height="25.8" transform="rotate(60)"/><rect x="-2.6" y="-12.9" width="5.2" height="25.8" transform="rotate(120)"/></g></svg><div class="t" style="left:34.70px;top:245.30px;font-size:7.5px;font-weight:700;color:#f9c22e;letter-spacing:0.05px;">Presented By :</div><div class="t" style="left:34.70px;top:255.30px;font-size:7.4px;font-weight:700;color:#f4f6fa;letter-spacing:0px;">Emily Johnson</div><div class="t" style="left:34.70px;top:277.30px;font-size:7.5px;font-weight:700;color:#f9c22e;letter-spacing:0.05px;">Presented To:</div><div class="t" style="left:34.70px;top:287.30px;font-size:7.6px;font-weight:700;color:#f4f6fa;letter-spacing:0.05px;">National Endowment for the Arts</div><div class="t" style="left:248.80px;top:325.30px;font-size:6.2px;font-weight:400;color:#c9d0dc;letter-spacing:0px;">1</div><div class="r" style="left:0.00px;top:332.30px;width:259.50px;height:5.60px;background:#f9c22e;"></div></div></div><div class="r" style="left:613.30px;top:120.00px;width:17.20px;height:121.00px;background:#fff;border-radius:3px 0 0 3px;"></div><svg class="r" style="left:618.80px;top:127.00px;" width="6" height="3.6" viewBox="0 0 6 3.6"><path d="M0.5 3.1 L3 0.6 L5.5 3.1" fill="none" stroke="#b5b5b5" stroke-width="0.85" stroke-linecap="round" stroke-linejoin="round"/></svg><div class="r" style="left:616.30px;top:138.30px;width:10.50px;height:11.00px;background:#fff;border:1px solid #8a8a8a;border-radius:2px;"></div><div class="t" style="left:621.55px;transform:translateX(-50%);top:141.00px;font-size:7px;font-weight:400;color:#333;letter-spacing:0px;">1</div><div class="t" style="left:621.60px;transform:translateX(-50%);top:153.00px;font-size:6.4px;font-weight:400;color:#555;letter-spacing:0px;">of 5</div><svg class="r" style="left:618.80px;top:166.50px;" width="6" height="3.6" viewBox="0 0 6 3.6"><path d="M0.5 0.6 L3 3.1 L5.5 0.6" fill="none" stroke="#444" stroke-width="0.9" stroke-linecap="round" stroke-linejoin="round"/></svg><div class="r" style="left:615.60px;top:180.00px;width:11.80px;height:1.00px;background:#e8e8e8;"></div><svg class="r" style="left:617.70px;top:189.20px;" width="8" height="8" viewBox="0 0 8 8"><rect x="0.5" y="0.5" width="5" height="5" rx="0.8" fill="none" stroke="#444" stroke-width="0.9" stroke-linecap="round" stroke-linejoin="round"/><rect x="2.4" y="2.4" width="5" height="5" rx="0.8" fill="#fff" stroke="#444" stroke-width="0.9"/><path d="M4.9 3.7 V6.1 M3.7 4.9 H6.1" fill="none" stroke="#444" stroke-width="0.9" stroke-linecap="round" stroke-linejoin="round"/></svg><svg class="r" style="left:618.30px;top:210.00px;" width="7" height="7" viewBox="0 0 7 7"><path d="M3.5 0.5 V6.5 M0.5 3.5 H6.5" fill="none" stroke="#444" stroke-width="0.9" stroke-linecap="round" stroke-linejoin="round"/></svg><svg class="r" style="left:618.20px;top:228.30px;" width="7" height="8.5" viewBox="0 0 7 8.5"><path d="M0.4 1.7 H6.6 M2.3 1.7 V0.5 H4.7 V1.7 M1.1 1.7 L1.6 8 H5.4 L5.9 1.7 M2.8 3.4 V6.4 M4.2 3.4 V6.4" fill="none" stroke="#444" stroke-width="0.9" stroke-linecap="round" stroke-linejoin="round"/></svg><div class="r" style="left:597.30px;top:169.40px;width:14.40px;height:14.60px;background:#fff;border-radius:2.5px;"></div><svg class="r" style="left:602.60px;top:173.60px;" width="4" height="6.2" viewBox="0 0 4 6.2"><path d="M0.6 0.6 L3.2 3.1 L0.6 5.6" fill="none" stroke="#444" stroke-width="0.9" stroke-linecap="round" stroke-linejoin="round"/></svg><div class="r" style="left:567.70px;top:379.60px;width:54.50px;height:15.10px;background:#fff;border-radius:2.5px;box-shadow:0 0 1.5px rgba(0,0,0,0.18);"></div><div class="r" style="left:583.00px;top:380.50px;width:0.80px;height:13.50px;background:#ececec;"></div><div class="r" style="left:606.00px;top:380.50px;width:0.80px;height:13.50px;background:#ececec;"></div><div class="r" style="left:573.00px;top:386.80px;width:4.60px;height:0.80px;background:#3a3a3a;"></div><div class="t" style="left:596.80px;transform:translateX(-50%);top:384.00px;font-size:7.3px;font-weight:400;color:#2e2e2e;letter-spacing:0px;">64%</div><svg class="r" style="left:612.00px;top:384.60px;" width="5.4" height="5.4" viewBox="0 0 5.4 5.4"><path d="M2.7 0 V5.4 M0 2.7 H5.4" stroke="#3a3a3a" stroke-width="0.9"/></svg><div class="r" style="left:630.50px;top:25.00px;width:99.50px;height:382.00px;background:#fff;"></div><div class="r" style="left:630.00px;top:23.00px;width:1.00px;height:384.00px;background:#e3e3e3;"></div><div class="r" style="left:631.00px;top:24.20px;width:99.00px;height:98.30px;background:#eaf2fd;"></div><div class="r" style="left:728.60px;top:23.00px;width:1.40px;height:384.00px;background:#ececec;"></div><div class="t" style="left:641.60px;transform:translateX(-50%);top:71.00px;font-size:6.6px;font-weight:400;color:#555;letter-spacing:0px;">1</div><div class="t" style="left:641.60px;transform:translateX(-50%);top:170.00px;font-size:6.6px;font-weight:400;color:#555;letter-spacing:0px;">2</div><div class="t" style="left:641.60px;transform:translateX(-50%);top:269.00px;font-size:6.6px;font-weight:400;color:#555;letter-spacing:0px;">3</div><div class="t" style="left:641.60px;transform:translateX(-50%);top:368.00px;font-size:6.6px;font-weight:400;color:#555;letter-spacing:0px;">4</div><div class="r" style="left:651.3px;top:28.1px;width:69.93px;height:90.62px;overflow:hidden;border-radius:1.5px;text-rendering:geometricPrecision;"><div class="r" style="left:0;top:0;width:259.3px;height:336px;transform:scale(0.26970);transform-origin:0 0;"><div class="r" style="left:0;top:0;width:259.5px;height:336px;background:#0d3669;overflow:hidden;"><svg class="r" style="left:33.80px;top:43.10px" width="11" height="11" viewBox="0 0 11 11"><g transform="rotate(-12 3.4 3.4)"><path d="M0.6 1.2 Q3.4 0.1 6.2 1.2 L6.2 3.4 Q6.2 6.2 3.4 6.4 Q0.6 6.2 0.6 3.4 Z" fill="#fff"/><circle cx="2.3" cy="2.7" r="0.6" fill="#0d3669"/><circle cx="4.5" cy="2.7" r="0.6" fill="#0d3669"/></g><g transform="rotate(14 7.2 7.4)"><path d="M4.2 5.0 Q7.2 3.8 10.1 5.0 L10.1 7.3 Q10.1 10.3 7.15 10.5 Q4.2 10.3 4.2 7.3 Z" fill="#fff" stroke="#0d3669" stroke-width="0.7"/><circle cx="6.1" cy="6.6" r="0.6" fill="#0d3669"/><circle cx="8.3" cy="6.6" r="0.6" fill="#0d3669"/><path d="M6.3 8.9 Q7.2 8.0 8.1 8.9" stroke="#0d3669" stroke-width="0.6" fill="none"/></g></svg><div class="t" style="left:48.20px;top:46.30px;font-size:6.4px;font-weight:700;color:#f2f4f8;letter-spacing:0px;">Art Enthusias Society</div><div class="r" style="left:170.00px;top:41.30px;width:57.50px;height:14.00px;background:#fbc22e;border-radius:7px;"></div><div class="t" style="left:177.30px;top:46.30px;font-size:6.7px;font-weight:700;color:#14284a;letter-spacing:0px;">June 20, 2030</div><div class="t" style="left:32.00px;top:82.30px;font-size:22px;font-weight:700;color:#fff;letter-spacing:0.57px;">Art and Culture</div><div class="t" style="left:32.00px;top:112.30px;font-size:22px;font-weight:700;color:#fff;letter-spacing:0.35px;">Grant Proposal</div><div class="t" style="left:32.00px;top:142.30px;font-size:22px;font-weight:700;color:#fff;letter-spacing:1.14px;">Template</div><div class="t" style="left:34.70px;top:177.30px;font-size:6.85px;font-weight:400;color:#e4e8f0;letter-spacing:0px;">Enriching Communities Through Art</div><svg class="r" style="left:31.60px;top:199.10px" width="26" height="26" viewBox="-13 -13 26 26"><g fill="#f9c22e"><rect x="-2.6" y="-12.9" width="5.2" height="25.8"/><rect x="-2.6" y="-12.9" width="5.2" height="25.8" transform="rotate(60)"/><rect x="-2.6" y="-12.9" width="5.2" height="25.8" transform="rotate(120)"/></g></svg><div class="t" style="left:34.70px;top:245.30px;font-size:7.5px;font-weight:700;color:#f9c22e;letter-spacing:0.05px;">Presented By :</div><div class="t" style="left:34.70px;top:255.30px;font-size:7.4px;font-weight:700;color:#f4f6fa;letter-spacing:0px;">Emily Johnson</div><div class="t" style="left:34.70px;top:277.30px;font-size:7.5px;font-weight:700;color:#f9c22e;letter-spacing:0.05px;">Presented To:</div><div class="t" style="left:34.70px;top:287.30px;font-size:7.6px;font-weight:700;color:#f4f6fa;letter-spacing:0.05px;">National Endowment for the Arts</div><div class="t" style="left:248.80px;top:325.30px;font-size:6.2px;font-weight:400;color:#c9d0dc;letter-spacing:0px;">1</div><div class="r" style="left:0.00px;top:332.30px;width:259.50px;height:5.60px;background:#f9c22e;"></div></div></div></div><div class="r" style="left:650.60px;top:27.40px;width:71.30px;height:92.00px;background:none;border:1px solid #3d8ef5;border-radius:2.5px;box-shadow:0 0 1px rgba(61,142,245,0.6);"></div><div class="r" style="left:651.70px;top:127.80px;width:69.30px;height:90.10px;background:#fff;box-shadow:0 0 0 0.7px #d9d9d9,0 0.6px 1.5px rgba(0,0,0,0.18);border-radius:1.5px;"></div><div class="r" style="left:651.70px;top:127.80px;width:69.30px;height:17.20px;background:#0d3669;"></div><div class="t" style="left:658.80px;top:137.00px;font-size:6.5px;font-weight:700;color:#fff;letter-spacing:0px;transform:scaleX(0.875);transform-origin:0 0;">Cover letter</div><svg class="r" style="left:696.20px;top:134.00px" width="7.2" height="7.2" viewBox="-3.6 -3.6 7.2 7.2"><g fill="#f9c22e"><rect x="-0.65" y="-3.6" width="1.3" height="7.2"/><rect x="-0.65" y="-3.6" width="1.3" height="7.2" transform="rotate(60)"/><rect x="-0.65" y="-3.6" width="1.3" height="7.2" transform="rotate(120)"/></g></svg><div class="r" style="left:659.70px;top:148.30px;width:29.30px;height:3.00px;background:#fff;border:0.4px solid #b0b0b0;"></div><div class="r" style="left:659.70px;top:151.30px;width:29.30px;height:3.00px;background:#fff;border:0.4px solid #b0b0b0;"></div><div class="r" style="left:661.00px;top:149.60px;width:11.00px;height:0.40px;background:#c8c8c8;"></div><div class="r" style="left:661.00px;top:152.60px;width:21.00px;height:0.40px;background:#c8c8c8;"></div><div class="r" style="left:702.00px;top:149.60px;width:12.00px;height:0.40px;background:#d0d0d0;"></div><div class="r" style="left:660.00px;top:157.30px;width:1.50px;height:1.30px;background:#777;"></div><div class="r" style="left:663.00px;top:157.70px;width:17.00px;height:0.40px;background:#cfcfcf;"></div><div class="r" style="left:660.00px;top:160.20px;width:1.50px;height:1.30px;background:#777;"></div><div class="r" style="left:663.00px;top:160.60px;width:9.00px;height:0.40px;background:#cfcfcf;"></div><div class="r" style="left:659.50px;top:166.80px;width:10.50px;height:0.40px;background:#c0c0c0;"></div><div class="r" style="left:659.20px;top:171.20px;width:54.00px;height:0.40px;background:#d2d2d2;"></div><div class="r" style="left:659.20px;top:173.45px;width:54.00px;height:0.40px;background:#d2d2d2;"></div><div class="r" style="left:659.20px;top:175.70px;width:54.00px;height:0.40px;background:#d2d2d2;"></div><div class="r" style="left:659.20px;top:177.95px;width:52.00px;height:0.40px;background:#d2d2d2;"></div><div class="r" style="left:659.20px;top:180.20px;width:13.00px;height:0.40px;background:#d2d2d2;"></div><div class="r" style="left:681.00px;top:171.20px;width:16.00px;height:0.40px;background:#9a9a9a;"></div><div class="r" style="left:659.50px;top:187.70px;width:6.50px;height:0.40px;background:#c0c0c0;"></div><svg class="r" style="left:659.50px;top:190.50px;" width="9" height="3.5" viewBox="0 0 9 3.5"><path d="M0.3 2.5 Q2 0.5 3.5 2 Q5 3.2 6 1 Q7 2.8 8.7 2.6" fill="none" stroke="#888" stroke-width="0.4"/></svg><div class="r" style="left:659.50px;top:196.30px;width:8.50px;height:0.50px;background:#888;"></div><div class="r" style="left:659.50px;top:198.60px;width:5.50px;height:0.40px;background:#c0c0c0;"></div><div class="r" style="left:667.00px;top:198.60px;width:16.00px;height:0.40px;background:#888;"></div><div class="r" style="left:659.50px;top:200.80px;width:23.50px;height:0.40px;background:#c0c0c0;"></div><div class="r" style="left:659.50px;top:203.00px;width:9.50px;height:0.40px;background:#c0c0c0;"></div><div class="r" style="left:659.50px;top:205.20px;width:17.50px;height:0.40px;background:#c8c8c8;"></div><div class="r" style="left:651.70px;top:216.30px;width:69.30px;height:1.60px;background:#f2cc62;"></div><div class="r" style="left:651.70px;top:227.20px;width:69.30px;height:88.80px;background:#fff;box-shadow:0 0 0 0.7px #d9d9d9,0 0.6px 1.5px rgba(0,0,0,0.18);border-radius:1.5px;"></div><div class="r" style="left:651.70px;top:227.20px;width:69.30px;height:16.30px;background:#0d3669;"></div><div class="t" style="left:659.00px;top:235.00px;font-size:6.5px;font-weight:700;color:#fff;letter-spacing:0px;transform:scaleX(0.842);transform-origin:0 0;">Executive Summary</div><svg class="r" style="left:710.70px;top:229.00px" width="7.2" height="7.2" viewBox="-3.6 -3.6 7.2 7.2"><g fill="#f9c22e"><rect x="-0.65" y="-3.6" width="1.3" height="7.2"/><rect x="-0.65" y="-3.6" width="1.3" height="7.2" transform="rotate(60)"/><rect x="-0.65" y="-3.6" width="1.3" height="7.2" transform="rotate(120)"/></g></svg><div class="r" style="left:659.30px;top:247.40px;width:14.70px;height:0.80px;background:#1b3d78;"></div><div class="r" style="left:659.30px;top:251.30px;width:52.00px;height:0.50px;background:#b0b0b0;"></div><div class="r" style="left:659.30px;top:253.70px;width:52.00px;height:0.50px;background:#b0b0b0;"></div><div class="r" style="left:659.30px;top:256.10px;width:22.00px;height:0.50px;background:#b0b0b0;"></div><div class="r" style="left:659.30px;top:262.20px;width:17.70px;height:0.80px;background:#1b3d78;"></div><div class="r" style="left:661.00px;top:265.40px;width:20.00px;height:0.50px;background:#aaa;"></div><div class="r" style="left:661.00px;top:267.50px;width:24.00px;height:0.50px;background:#aaa;"></div><div class="r" style="left:661.00px;top:269.60px;width:24.00px;height:0.50px;background:#aaa;"></div><div class="r" style="left:661.00px;top:271.70px;width:4.00px;height:0.50px;background:#aaa;"></div><div class="r" style="left:651.70px;top:285.90px;width:69.30px;height:4.70px;background:#f9c22e;"></div><div class="r" style="left:651.70px;top:290.60px;width:69.30px;height:23.30px;background:#0d3669;"></div><svg class="r" style="left:689.00px;top:260.30px;" width="28.1" height="35.7" viewBox="0 0 28.1 35.7"><rect width="28.1" height="35.7" fill="#6e6e6e"/><rect width="28.1" height="5" fill="#c8c8c8"/><path d="M0 3 Q10 1 22 4 L22 8 Q10 6 0 8 Z" fill="#e2e2e2"/><rect x="0" y="8" width="5" height="20" fill="#3e3e3e"/><ellipse cx="11" cy="17" rx="6.5" ry="8" fill="#9a9a9a"/><ellipse cx="10" cy="15" rx="3" ry="3.5" fill="#b5b5b5"/><rect x="20" y="6" width="8.1" height="22" fill="#4a4a4a"/><ellipse cx="22" cy="19" rx="4" ry="6" fill="#8d8d8d"/><path d="M3 35.7 Q6 25 14 24 Q22 25 25 35.7 Z" fill="#dedede"/><rect x="18" y="27" width="4" height="8.7" fill="#555"/></svg><div class="r" style="left:672.30px;top:279.30px;width:20.80px;height:14.60px;background:#fff;"></div><div class="r" style="left:674.00px;top:281.60px;width:18.00px;height:0.60px;background:#4a6290;"></div><div class="r" style="left:679.00px;top:288.30px;width:9.00px;height:1.50px;background:#2b4a85;"></div><div class="r" style="left:659.30px;top:297.80px;width:17.70px;height:0.70px;background:#d9a928;"></div><div class="r" style="left:659.30px;top:301.50px;width:54.00px;height:0.50px;background:#6f86ad;"></div><div class="r" style="left:659.30px;top:303.70px;width:52.00px;height:0.50px;background:#6f86ad;"></div><div class="r" style="left:659.30px;top:305.90px;width:30.00px;height:0.50px;background:#6f86ad;"></div><div class="r" style="left:651.80px;top:326.80px;width:68.80px;height:93.20px;background:#fff;box-shadow:0 0 0 0.7px #d9d9d9,0 0.6px 1.5px rgba(0,0,0,0.18);border-radius:1.5px;"></div><div class="r" style="left:651.80px;top:326.80px;width:68.80px;height:17.20px;background:#0d3669;"></div><div class="t" style="left:667.60px;top:336.00px;font-size:6.5px;font-weight:700;color:#fff;letter-spacing:0px;transform:scaleX(0.85);transform-origin:0 0;">Project Details</div><svg class="r" style="left:706.30px;top:329.30px" width="7.2" height="7.2" viewBox="-3.6 -3.6 7.2 7.2"><g fill="#f9c22e"><rect x="-0.65" y="-3.6" width="1.3" height="7.2"/><rect x="-0.65" y="-3.6" width="1.3" height="7.2" transform="rotate(60)"/><rect x="-0.65" y="-3.6" width="1.3" height="7.2" transform="rotate(120)"/></g></svg><div class="r" style="left:658.70px;top:348.00px;width:18.00px;height:0.40px;background:#d0d0d0;"></div><div class="r" style="left:658.70px;top:350.05px;width:14.00px;height:0.40px;background:#d0d0d0;"></div><div class="r" style="left:658.70px;top:352.10px;width:14.00px;height:0.40px;background:#d0d0d0;"></div><div class="r" style="left:658.70px;top:354.15px;width:14.00px;height:0.40px;background:#d0d0d0;"></div><div class="r" style="left:658.70px;top:356.20px;width:12.00px;height:0.40px;background:#d0d0d0;"></div><div class="r" style="left:658.70px;top:358.25px;width:18.00px;height:0.40px;background:#d0d0d0;"></div><div class="r" style="left:658.70px;top:360.30px;width:18.00px;height:0.40px;background:#d0d0d0;"></div><div class="r" style="left:658.70px;top:362.35px;width:18.00px;height:0.40px;background:#d0d0d0;"></div><div class="r" style="left:658.70px;top:364.40px;width:8.00px;height:0.40px;background:#d0d0d0;"></div><svg class="r" style="left:686.90px;top:346.70px;" width="33.7" height="18.1" viewBox="0 0 33.7 18.1"><rect width="33.7" height="18.1" fill="#8a8a8a"/><rect width="33.7" height="6" fill="#d4d4d4"/><path d="M0 6 L6 3 L14 5 L22 2 L33.7 4 V9 H0 Z" fill="#9d9d9d"/><rect x="3" y="7" width="3" height="9" fill="#3c3c3c"/><rect x="9" y="8" width="3" height="8" fill="#505050"/><rect x="16" y="7" width="3" height="9" fill="#e0e0e0"/><rect x="23" y="8" width="3" height="8" fill="#444"/><rect x="29" y="6" width="3" height="10" fill="#2e2e2e"/><rect y="15" width="33.7" height="3.1" fill="#6a6a6a"/></svg><div class="r" style="left:674.70px;top:366.50px;width:21.30px;height:4.70px;background:#f9c22e;"></div><div class="r" style="left:677.00px;top:368.50px;width:17.00px;height:0.60px;background:#7a5a10;"></div><div class="r" style="left:651.80px;top:386.20px;width:68.80px;height:33.80px;background:#f9c22e;"></div><svg class="r" style="left:658.70px;top:373.40px;" width="21.3" height="18.1" viewBox="0 0 21.3 18.1"><rect width="21.3" height="18.1" fill="#7a7a7a"/><rect width="21.3" height="5" fill="#bdbdbd"/><rect x="1" y="3" width="4" height="15" fill="#3a3a3a"/><rect x="16" y="4" width="4" height="14" fill="#444"/><ellipse cx="10" cy="9" rx="3" ry="3.5" fill="#cfcfcf"/><path d="M5 18.1 Q7 11 10.5 11 Q14 11 15 18.1 Z" fill="#5e5e5e"/><rect y="14" width="21.3" height="4.1" fill="#8e8e8e" opacity="0.6"/></svg><div class="r" style="left:657.60px;top:392.40px;width:24.60px;height:2.60px;background:#fff;border:0.4px solid #2b4a85;"></div><div class="r" style="left:660.00px;top:397.50px;width:20.00px;height:0.50px;background:#9a7a2a;"></div><div class="r" style="left:660.00px;top:399.80px;width:18.00px;height:0.50px;background:#9a7a2a;"></div><div class="r" style="left:660.00px;top:402.10px;width:16.00px;height:0.50px;background:#9a7a2a;"></div><div class="r" style="left:660.00px;top:404.40px;width:14.00px;height:0.50px;background:#9a7a2a;"></div><div class="r" style="left:690.30px;top:367.00px;width:32.00px;height:32.00px;background:#0c2c67;border-radius:50%;"></div><div class="r" style="left:698.20px;top:378.40px;width:15.90px;height:8.00px;background:#fff;border-radius:4px;"></div><svg class="r" style="left:707.50px;top:386.00px;" width="4" height="5" viewBox="0 0 4 5"><path d="M0 0 H3.6 V4.6 Z" fill="#fff"/></svg></div>
</body></html>
